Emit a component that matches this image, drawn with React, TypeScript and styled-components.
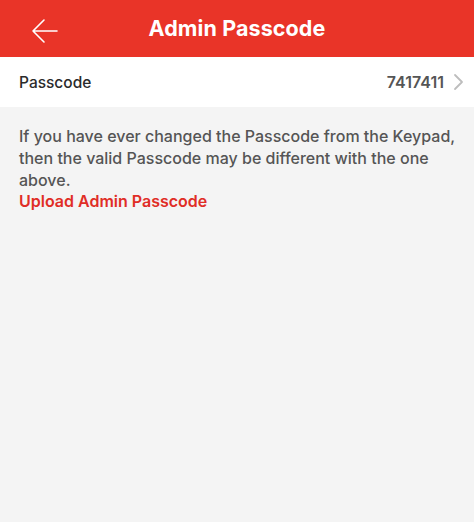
import React from 'react';
import styled, { createGlobalStyle } from 'styled-components';

const GlobalStyle = createGlobalStyle`
  html, body {
    margin: 0;
    padding: 0;
    background: #f4f4f4;
  }
  body {
    font-family: Inter, "Noto Sans", sans-serif;
    -webkit-font-smoothing: antialiased;
  }
`;

const Page = styled.div`
  min-height: 100vh;
  background: #f4f4f4;
`;

const Header = styled.header`
  height: 57px;
  background: #e93428;
  display: flex;
  align-items: center;
  justify-content: center;
  position: relative;
`;

const BackButton = styled.button`
  position: absolute;
  left: 30px;
  top: 16px;
  width: 30px;
  height: 30px;
  padding: 0;
  border: 0;
  background: none;
  display: flex;
  align-items: center;
  justify-content: center;
`;

const Title = styled.h1`
  margin: 0 0 2px 0;
  color: #fff;
  font-size: 21.5px;
  font-weight: 700;
  letter-spacing: 0.1px;
`;

const Row = styled.div`
  height: 50px;
  background: #fff;
  display: flex;
  align-items: center;
  padding: 0 10px 0 19px;
`;

const Label = styled.span`
  flex: 1;
  font-size: 15.5px;
  font-weight: 500;
  color: #2b2b2b;
`;

const Value = styled.span`
  font-size: 16px;
  font-weight: 600;
  color: #555;
  margin-right: 8px;
`;

const Note = styled.div`
  padding: 18px 19px 0 19px;
`;

const Text = styled.p`
  margin: 0;
  font-size: 16px;
  line-height: 22px;
  font-weight: 500;
  color: #555;
`;

const Link = styled.a`
  display: block;
  margin-top: 0;
  font-size: 16px;
  line-height: 20px;
  font-weight: 600;
  color: #e02d26;
  text-decoration: none;
`;

export default function App() {
  return (
    <Page>
      <GlobalStyle />
      <Header>
        <BackButton aria-label="Back">
          <svg width="28" height="26" viewBox="0 0 28 26" fill="none" stroke="#fff" strokeWidth="1.6" strokeLinecap="round" strokeLinejoin="round">
            <path d="M2 13h24M13 2L2 13l11 11" />
          </svg>
        </BackButton>
        <Title>Admin Passcode</Title>
      </Header>
      <Row>
        <Label>Passcode</Label>
        <Value>7417411</Value>
        <svg width="12" height="18" viewBox="0 0 12 18" fill="none" stroke="#bdbdbd" strokeWidth="1.8" strokeLinecap="round" strokeLinejoin="round">
          <path d="M3 2l7 7-7 7" />
        </svg>
      </Row>
      <Note>
        <Text>
          If you have ever changed the Passcode from the Keypad, then the valid Passcode may be different with the one above.
        </Text>
        <Link href="#">Upload Admin Passcode</Link>
      </Note>
    </Page>
  );
}
